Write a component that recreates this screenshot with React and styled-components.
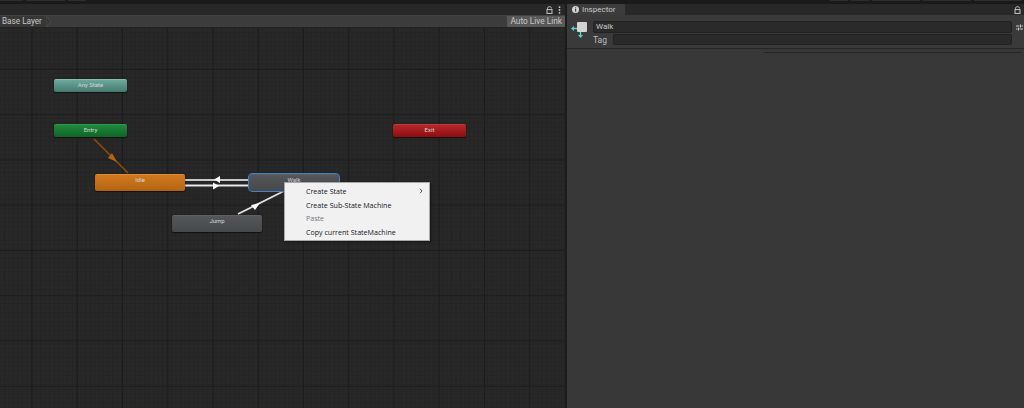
import styled, { createGlobalStyle } from 'styled-components'

const GlobalStyle = createGlobalStyle`
	html, body {
		margin: 0;
		padding: 0;
		background: #191919;
	}
	body {
		font-family: Roboto, "Liberation Sans", sans-serif;
	}
`

const Page = styled.div`
	width: 1024px;
	height: 408px;
	overflow: hidden;
	display: flex;
	flex-direction: column;
	background: #191919;
`

const TopStrip = styled.div`
	height: 4px;
	flex-shrink: 0;
	display: flex;
	justify-content: space-between;
	background: #1a1a1a;
`

const TopGroup = styled.div`
	display: flex;
	gap: 3px;
	padding: ${p => p.$pad};
`

const TopSegment = styled.div`
	width: ${p => p.$w}px;
	height: 1px;
	background: #2d2d2d;
`

const Windows = styled.div`
	flex: 1;
	display: flex;
	min-height: 0;
`

const GraphWindow = styled.div`
	width: 565px;
	display: flex;
	flex-direction: column;
`

const TabRow = styled.div`
	height: 11px;
	flex-shrink: 0;
	display: flex;
	align-items: center;
	justify-content: flex-end;
	gap: 5px;
	padding-right: 4px;
	background: #282828;
`

const Toolbar = styled.div`
	height: 13px;
	flex-shrink: 0;
	display: flex;
	justify-content: space-between;
	background: #3c3c3c;
	border-top: 1px solid #434343;
	box-sizing: border-box;
	border-bottom: 1px solid #232323;
`

const Crumb = styled.div`
	position: relative;
	font-size: 8.2px;
	line-height: 11px;
	color: #c8c8c8;
	padding-left: 2px;
	width: 46px;
	box-sizing: border-box;
	background: #373737;
`

const CrumbArrow = styled.svg`
	position: absolute;
	left: 46px;
	top: 0;
`

const LiveLink = styled.div`
	font-size: 8.3px;
	line-height: 11px;
	color: #c8c8c8;
	padding: 0 3px;
	background: #585858;
`

const Graph = styled.div`
	position: relative;
	flex: 1;
	background-color: #282828;
	background-image:
		linear-gradient(to right, #1c1c1c 1px, transparent 1px),
		linear-gradient(to bottom, #1c1c1c 1px, transparent 1px),
		linear-gradient(to right, #242424 1px, transparent 1px),
		linear-gradient(to bottom, #242424 1px, transparent 1px);
	background-size: 45.25px 45.25px, 45.25px 45.25px, 4.525px 4.525px, 4.525px 4.525px;
	background-position: 31.5px 41px, 31.5px 41px, 4px 4px, 4px 4px;
`

const Links = styled.svg`
	position: absolute;
	inset: 0;
	width: 100%;
	height: 100%;
	z-index: 1;
`

const nodeColors = {
	any: { top: '#6ba99c', bottom: '#47786e', border: '#83bdb1' },
	entry: { top: '#1f8a3c', bottom: '#0f6527', border: '#2f9a4c' },
	exit: { top: '#b3272b', bottom: '#8f0e10', border: '#c03a3e' },
	idle: { top: '#cf7a22', bottom: '#b3630f', border: '#dd8c35' },
	plain: { top: '#54565a', bottom: '#46484c', border: '#5e6064' },
}

const Node = styled.div`
	position: absolute;
	z-index: 2;
	left: ${p => p.$x}px;
	top: ${p => p.$y}px;
	width: ${p => p.$w}px;
	height: ${p => p.$h}px;
	box-sizing: border-box;
	border-radius: 2px;
	display: flex;
	justify-content: center;
	padding-top: ${p => p.$pad}px;
	font-size: 6px;
	line-height: 8px;
	color: #d6d6d6;
	background: linear-gradient(${p => nodeColors[p.$kind].top}, ${p => nodeColors[p.$kind].bottom});
	border-top: 1px solid ${p => nodeColors[p.$kind].border};
	box-shadow: 0 1px 1px #111, 0 0 1px #111;
	${p => p.$selected && 'outline: 1px solid #4580c4; border-radius: 3px;'}
`

const Menu = styled.div`
	position: absolute;
	z-index: 3;
	left: 284px;
	top: 154px;
	width: 146px;
	height: 59px;
	box-sizing: border-box;
	padding: 1px 0;
	display: flex;
	flex-direction: column;
	background: #f1f1f1;
	border: 1px solid #a8a8a8;
	box-shadow: 1px 1px 2px rgba(0, 0, 0, .5);
`

const MenuItem = styled.div`
	height: 13.9px;
	padding-left: 21px;
	padding-right: 6px;
	display: flex;
	align-items: center;
	justify-content: space-between;
	font-family: "Open Sans", "Liberation Sans", sans-serif;
	font-size: 7.1px;
	color: ${p => p.$disabled ? '#77717f' : '#15151f'};
`

const MenuArrow = styled.svg`
	flex-shrink: 0;
`

const Inspector = styled.div`
	flex: 1;
	display: flex;
	flex-direction: column;
	border-left: 2px solid #1c1c1c;
	box-sizing: border-box;
`

const InspectorTabs = styled.div`
	height: 11px;
	flex-shrink: 0;
	display: flex;
	justify-content: space-between;
	align-items: center;
	padding-right: 3px;
	background: #282828;
`

const InspectorTab = styled.div`
	width: 58px;
	height: 11px;
	display: flex;
	align-items: center;
	gap: 3px;
	padding-left: 5px;
	box-sizing: border-box;
	background: #3c3c3c;
	font-size: 8px;
	color: #c8c8c8;
`

const Header = styled.div`
	height: 34px;
	flex-shrink: 0;
	display: flex;
	padding: 6px 1px 0 4px;
	box-sizing: border-box;
	gap: 5px;
	background: #3a3a3a;
	border-bottom: 1px solid #262626;
`

const HeaderFields = styled.div`
	flex: 1;
	display: flex;
	flex-direction: column;
	gap: 1px;
`

const NameRow = styled.div`
	display: flex;
	align-items: center;
	gap: 4px;
`

const NameField = styled.div`
	flex: 1;
	height: 12px;
	box-sizing: border-box;
	padding-left: 2px;
	font-size: 8px;
	line-height: 10px;
	color: #c8c8c8;
	background: #2a2a2a;
	border: 1px solid #212121;
	border-radius: 2px;
`

const TagRow = styled.div`
	display: flex;
	align-items: center;
	gap: 6px;
	font-size: 8.5px;
	color: #bdbdbd;
`

const TagField = styled.div`
	flex: 1;
	height: 11px;
	margin-right: 11px;
	box-sizing: border-box;
	background: #2a2a2a;
	border: 1px solid #212121;
	border-radius: 2px;
`

const Body = styled.div`
	flex: 1;
	background: #383838;
	padding: 3px 2px 0 197px;
`

const BodyRule = styled.div`
	height: 1px;
	background: #262626;
`

function Lock() {
	return (
		<svg width="7" height="8" viewBox="0 0 7 8">
			<path d="M1.5 3.5V2.4C1.5 1.3 2.4.7 3.5.7s2 .6 2 1.7" fill="none" stroke="#c8c8c8" />
			<rect x="1" y="3.6" width="5" height="3.8" fill="none" stroke="#c8c8c8" />
		</svg>
	)
}

function Dots() {
	return (
		<svg width="3" height="8" viewBox="0 0 3 8">
			<circle cx="1.5" cy="1.2" r=".9" fill="#c8c8c8" />
			<circle cx="1.5" cy="4" r=".9" fill="#c8c8c8" />
			<circle cx="1.5" cy="6.8" r=".9" fill="#c8c8c8" />
		</svg>
	)
}

function InfoIcon() {
	return (
		<svg width="7" height="7" viewBox="0 0 7 7">
			<circle cx="3.5" cy="3.5" r="3.5" fill="#d4d4d4" />
			<rect x="3" y="3" width="1.2" height="2.6" fill="#3c3c3c" />
			<rect x="3" y="1.4" width="1.2" height="1" fill="#3c3c3c" />
		</svg>
	)
}

function StateIcon() {
	return (
		<svg width="17" height="18" viewBox="0 0 17 18" style={{ flexShrink: 0 }}>
			<rect x="6" y="1" width="10" height="10" rx="1" fill="#d4d4d4" />
			<path d="M2 7.5H6" stroke="#4fd6d6" strokeWidth="1.4" />
			<path d="M0 7.5l3-2.5v5z" fill="#4fd6d6" />
			<path d="M9.5 11v3" stroke="#4fd6d6" strokeWidth="1.4" />
			<path d="M9.5 17l-2.5-3h5z" fill="#4fd6d6" />
		</svg>
	)
}

function PresetIcon() {
	return (
		<svg width="7" height="7" viewBox="0 0 7 7">
			<path d="M0 2h3.5M5.5 2H7M0 5h1.5M3.5 5H7" stroke="#c8c8c8" />
			<path d="M4.5.5v3M2.5 3.5v3" stroke="#c8c8c8" />
		</svg>
	)
}

function App() {
	return (
		<Page>
			<GlobalStyle />
			<TopStrip>
				<TopGroup>
					<TopSegment $w={23} />
					<TopSegment $w={39} />
					<TopSegment $w={18} />
				</TopGroup>
				<TopGroup $pad="0 2px 0 0">
					<TopSegment $w={18} />
					<TopSegment $w={18} />
					<TopSegment $w={48} />
					<TopSegment $w={48} />
					<TopSegment $w={48} />
				</TopGroup>
			</TopStrip>
			<Windows>
				<GraphWindow>
					<TabRow>
						<Lock />
						<Dots />
					</TabRow>
					<Toolbar>
						<Crumb>
							Base Layer
							<CrumbArrow width="6" height="11" viewBox="0 0 6 11">
								<path d="M0 0l5 5.5L0 11z" fill="#373737" stroke="#555" strokeWidth=".7" />
							</CrumbArrow>
						</Crumb>
						<LiveLink>Auto Live Link</LiveLink>
					</Toolbar>
					<Graph>
						<Links viewBox="0 0 565 380">
							<path d="M94 111L128 145" stroke="#8a4d0c" strokeWidth="1.6" />
							<path d="M112 125l5 9-9-4z" fill="#b3650f" />
							<path d="M185 152H248" stroke="#c8c8c8" strokeWidth="1.8" />
							<path d="M185 157.5H248" stroke="#e8e8e8" strokeWidth="1.8" />
							<path d="M214 151.5l6-3.5v7z" fill="#fff" />
							<path d="M219 158l-6-3.5v7z" fill="#fff" />
							<path d="M238 186L284 163" stroke="#e4e4e4" strokeWidth="1.6" />
							<path d="M260 175l-9 2 4 5z" fill="#fff" />
						</Links>
						<Node $kind="any" $x={54} $y={51} $w={73} $h={13} $pad={1}>Any State</Node>
						<Node $kind="entry" $x={54} $y={96} $w={73} $h={13} $pad={1}>Entry</Node>
						<Node $kind="exit" $x={393} $y={96} $w={73} $h={13} $pad={1}>Exit</Node>
						<Node $kind="idle" $x={95} $y={146} $w={90} $h={17} $pad={1}>Idle</Node>
						<Node $kind="plain" $x={249} $y={146} $w={90} $h={17} $pad={1} $selected>Walk</Node>
						<Node $kind="plain" $x={172} $y={187} $w={90} $h={17} $pad={1}>Jump</Node>
						<Menu>
							<MenuItem>
								Create State
								<MenuArrow width="4" height="6" viewBox="0 0 4 6">
									<path d="M1 .8L3 3 1 5.2" fill="none" stroke="#333" strokeWidth=".8" />
								</MenuArrow>
							</MenuItem>
							<MenuItem>Create Sub-State Machine</MenuItem>
							<MenuItem $disabled>Paste</MenuItem>
							<MenuItem>Copy current StateMachine</MenuItem>
						</Menu>
					</Graph>
				</GraphWindow>
				<Inspector>
					<InspectorTabs>
						<InspectorTab><InfoIcon />Inspector</InspectorTab>
						<Lock />
					</InspectorTabs>
					<Header>
						<StateIcon />
						<HeaderFields>
							<NameRow>
								<NameField>Walk</NameField>
								<PresetIcon />
							</NameRow>
							<TagRow>Tag<TagField /></TagRow>
						</HeaderFields>
					</Header>
					<Body>
						<BodyRule />
					</Body>
				</Inspector>
			</Windows>
		</Page>
	)
}

export default App
